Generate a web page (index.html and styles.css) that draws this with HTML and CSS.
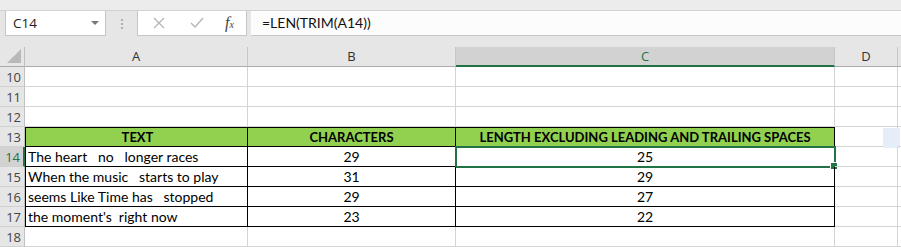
FILE: index.html
```html
<!DOCTYPE html>
<html lang="en">
<head>
    <meta charset="UTF-8">
    <title>LEN TRIM sheet</title>
    <link rel="stylesheet" href="styles.css">
</head>
<body>
    <div class="topstrip"></div>

    <!-- Formula bar -->
    <div class="formula-bar">
        <div class="name-box">
            <span>C14</span>
            <svg class="dd" width="8" height="5" viewBox="0 0 8 5"><path d="M0 0 L8 0 L4 4 Z" fill="#777"/></svg>
        </div>
        <div class="grip"><i></i><i></i><i></i></div>
        <div class="fx-box">
            <svg width="12" height="12" viewBox="0 0 12 12"><path d="M1 1 L11 11 M11 1 L1 11" stroke="#b4b4b4" stroke-width="1.3"/></svg>
            <svg width="14" height="12" viewBox="0 0 14 12"><path d="M1 6 L5 10 L13 1" stroke="#b4b4b4" stroke-width="1.3" fill="none"/></svg>
            <span class="fx"><i>f</i><small>x</small></span>
        </div>
        <div class="formula-input">=LEN(TRIM(A14))</div>
    </div>

    <!-- Sheet grid -->
    <div class="sheet">
        <div class="corner"><svg width="14" height="14" viewBox="0 0 14 14"><path d="M14 0 L14 14 L0 14 Z" fill="#b9b9b9"/></svg></div>
        <div class="colhead">A</div>
        <div class="colhead">B</div>
        <div class="colhead active">C</div>
        <div class="colhead">D</div>
        <div class="colhead end"></div>

        <div class="rowhead">10</div><div class="cell"></div><div class="cell"></div><div class="cell"></div><div class="cell"></div><div class="cell end"></div>
        <div class="rowhead">11</div><div class="cell"></div><div class="cell"></div><div class="cell"></div><div class="cell"></div><div class="cell end"></div>
        <div class="rowhead">12</div><div class="cell"></div><div class="cell"></div><div class="cell"></div><div class="cell"></div><div class="cell end"></div>

        <div class="rowhead">13</div>
        <div class="cell th first">TEXT</div>
        <div class="cell th">CHARACTERS</div>
        <div class="cell th">LENGTH EXCLUDING LEADING AND TRAILING SPACES</div>
        <div class="cell"><span class="quick"></span></div><div class="cell end"></div>

        <div class="rowhead active">14</div>
        <div class="cell td first">The heart   no   longer races</div>
        <div class="cell td num">29</div>
        <div class="cell td num selected">25</div>
        <div class="cell"></div><div class="cell end"></div>

        <div class="rowhead">15</div>
        <div class="cell td first">When the music   starts to play</div>
        <div class="cell td num">31</div>
        <div class="cell td num">29</div>
        <div class="cell"></div><div class="cell end"></div>

        <div class="rowhead">16</div>
        <div class="cell td first">seems Like Time has   stopped</div>
        <div class="cell td num">29</div>
        <div class="cell td num">27</div>
        <div class="cell"></div><div class="cell end"></div>

        <div class="rowhead">17</div>
        <div class="cell td first">the moment's  right now</div>
        <div class="cell td num">23</div>
        <div class="cell td num">22</div>
        <div class="cell"></div><div class="cell end"></div>

        <div class="rowhead">18</div><div class="cell"></div><div class="cell"></div><div class="cell"></div><div class="cell"></div><div class="cell end"></div>
    </div>
</body>
</html>
```

FILE: styles.css
```css
/* Excel-like sheet */
body {
    margin: 0;
    background-color: #e6e6e6;
    font-family: "Open Sans", "Noto Sans", sans-serif;
    overflow: hidden;
    width: 901px;
    height: 247px;
}
.topstrip {
    height: 11px;
    background-color: #ececec;
    border-bottom: 1px solid #d2d2d2;
    box-sizing: border-box;
}
.formula-bar {
    display: flex;
    height: 25px;
    align-items: stretch;
}
.name-box {
    width: 101px;
    margin-left: 5px;
    background-color: #fff;
    border: 1px solid #c6c6c6;
    border-top: none;
    box-sizing: border-box;
    display: flex;
    align-items: center;
    justify-content: space-between;
    padding: 0 6px 0 7px;
    font-size: 13.5px;
    color: #222;
}
.name-box .dd {
    margin-top: 1px;
}
.grip {
    width: 31px;
    display: flex;
    flex-direction: column;
    align-items: center;
    justify-content: center;
    gap: 2px;
}
.grip i {
    width: 2px;
    height: 2px;
    background-color: #b0b0b0;
}
.fx-box {
    width: 110px;
    background-color: #fff;
    border: 1px solid #c6c6c6;
    border-top: none;
    box-sizing: border-box;
    display: flex;
    align-items: center;
    padding-left: 15px;
    gap: 25px;
}
.fx {
    font-family: "Liberation Serif", serif;
    font-size: 16px;
    color: #444;
    margin-left: -4px;
}
.fx small {
    font-size: 10px;
    font-style: italic;
}
.formula-input {
    flex: 1;
    margin-left: 4px;
    background-color: #fcfcfc;
    border-bottom: 1px solid #c6c6c6;
    box-sizing: border-box;
    font-family: "Lato", sans-serif;
    font-size: 14px;
    color: #111;
    padding-left: 11px;
    line-height: 24px;
}
.sheet {
    margin-top: 11px;
    display: grid;
    grid-template-columns: 25px 223px 208px 379px 63px 3px;
    grid-template-rows: 20px repeat(9, 20px);
    background-color: #fff;
}
.corner {
    background-color: #e6e6e6;
    border-right: 1px solid #c0c0c0;
    border-bottom: 1px solid #ababab;
    display: flex;
    align-items: flex-end;
    justify-content: flex-end;
    padding: 0 3px 3px 0;
    box-sizing: border-box;
}
.colhead {
    background-color: #e6e6e6;
    border-right: 1px solid #c6c6c6;
    border-bottom: 1px solid #ababab;
    box-sizing: border-box;
    font-size: 13px;
    color: #333;
    text-align: center;
    line-height: 19px;
}
.colhead.active {
    background-color: #d2d2d2;
    color: #217346;
    border-bottom: 2px solid #217346;
}
.colhead.end, .cell.end {
    border-right: none;
}
.rowhead {
    background-color: #e6e6e6;
    border-right: 1px solid #c0c0c0;
    border-bottom: 1px solid #d0d0d0;
    box-sizing: border-box;
    font-size: 13px;
    color: #444;
    text-align: right;
    padding-right: 3px;
    line-height: 20px;
}
.rowhead.active {
    background-color: #d2d2d2;
    color: #217346;
    border-right: 2px solid #217346;
}
.cell {
    border-right: 1px solid #d4d4d4;
    border-bottom: 1px solid #d4d4d4;
    box-sizing: border-box;
    font-family: "Lato", sans-serif;
    font-size: 14px;
    color: #000;
    line-height: 19px;
    white-space: pre;
    position: relative;
}
.th {
    background-color: #92d050;
    font-weight: bold;
    text-align: center;
    font-size: 13px;
    border-color: #000;
    border-top: 1px solid #000;
}
.td {
    border-color: #000;
}
.first {
    border-left: 1px solid #000;
    padding-left: 2px;
}
.num {
    text-align: center;
}
.selected {
    outline: 2px solid #217346;
    outline-offset: -1px;
}
.selected::after {
    content: "";
    position: absolute;
    right: -4px;
    bottom: -4px;
    width: 6px;
    height: 6px;
    background-color: #217346;
    border: 1px solid #fff;
}
.quick {
    position: absolute;
    right: -3px;
    top: 1px;
    width: 17px;
    height: 20px;
    background-color: #e4edf8;
}
```
